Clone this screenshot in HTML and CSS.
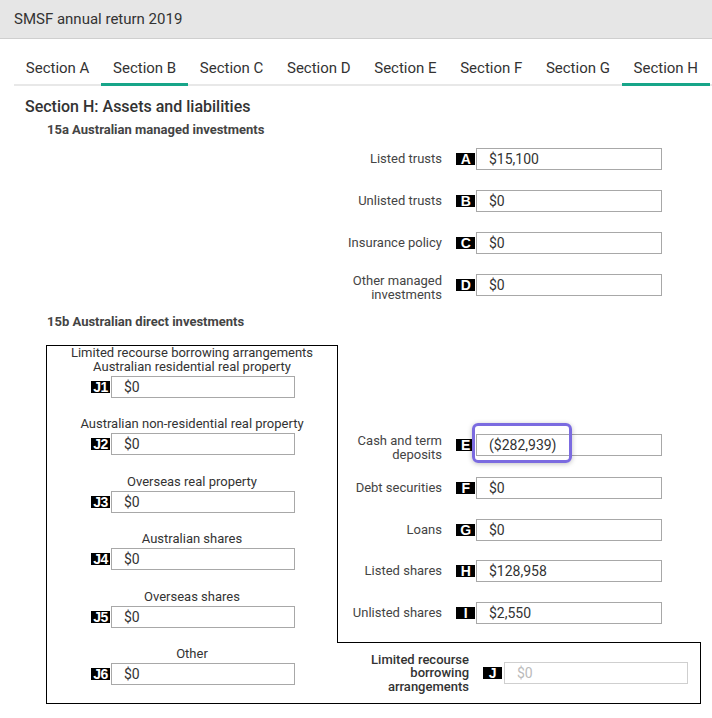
FILE: index.html
```html
<!DOCTYPE html>
<html>
<head>
  <meta charset="utf-8">
  <link rel="stylesheet" href="styles.css">
</head>
<body>
  <div class="header">SMSF annual return 2019</div>

  <div class="tabs">
    <div class="tab">Section A</div>
    <div class="tab active">Section B</div>
    <div class="tab">Section C</div>
    <div class="tab">Section D</div>
    <div class="tab">Section E</div>
    <div class="tab">Section F</div>
    <div class="tab">Section G</div>
    <div class="tab active">Section H</div>
  </div>

  <div class="section-title">Section H: Assets and liabilities</div>

  <!-- 15a -->
  <div class="sub-title">15a Australian managed investments</div>
  <div class="managed">
    <div class="row">
      <div class="label">Listed trusts</div>
      <div class="badge">A</div>
      <div class="field">$15,100</div>
    </div>
    <div class="row">
      <div class="label">Unlisted trusts</div>
      <div class="badge">B</div>
      <div class="field">$0</div>
    </div>
    <div class="row">
      <div class="label">Insurance policy</div>
      <div class="badge">C</div>
      <div class="field">$0</div>
    </div>
    <div class="row">
      <div class="label multi">Other managed investments</div>
      <div class="badge">D</div>
      <div class="field">$0</div>
    </div>
  </div>

  <!-- 15b -->
  <div class="sub-title sub-b">15b Australian direct investments</div>
  <div class="direct">
    <div class="lrba">
      <div class="lrba-title">Limited recourse borrowing arrangements</div>
      <div class="group first">
        <div class="group-label">Australian residential real property</div>
        <div class="group-row"><div class="badge">J1</div><div class="field small">$0</div></div>
      </div>
      <div class="group">
        <div class="group-label">Australian non-residential real property</div>
        <div class="group-row"><div class="badge">J2</div><div class="field small">$0</div></div>
      </div>
      <div class="group">
        <div class="group-label">Overseas real property</div>
        <div class="group-row"><div class="badge">J3</div><div class="field small">$0</div></div>
      </div>
      <div class="group">
        <div class="group-label">Australian shares</div>
        <div class="group-row"><div class="badge">J4</div><div class="field small">$0</div></div>
      </div>
      <div class="group">
        <div class="group-label">Overseas shares</div>
        <div class="group-row"><div class="badge">J5</div><div class="field small">$0</div></div>
      </div>
      <div class="group">
        <div class="group-label">Other</div>
        <div class="group-row"><div class="badge">J6</div><div class="field small">$0</div></div>
      </div>
    </div>

    <div class="direct-fields">
      <div class="row row-e">
        <div class="label multi">Cash and term deposits</div>
        <div class="badge">E</div>
        <div class="field focus-wrap">($282,939)<span class="focus-ring"></span></div>
      </div>
      <div class="row">
        <div class="label">Debt securities</div>
        <div class="badge">F</div>
        <div class="field">$0</div>
      </div>
      <div class="row">
        <div class="label">Loans</div>
        <div class="badge">G</div>
        <div class="field">$0</div>
      </div>
      <div class="row">
        <div class="label">Listed shares</div>
        <div class="badge">H</div>
        <div class="field">$128,958</div>
      </div>
      <div class="row">
        <div class="label">Unlisted shares</div>
        <div class="badge">I</div>
        <div class="field">$2,550</div>
      </div>
    </div>

    <div class="lrba-total">
      <div class="label total-label">Limited recourse borrowing arrangements</div>
      <div class="badge">J</div>
      <div class="field small disabled">$0</div>
    </div>
  </div>
</body>
</html>
```

FILE: styles.css
```css
body {
  margin: 0;
  padding: 0;
  font-family: Roboto, "Liberation Sans", sans-serif;
  font-size: 13px;
  color: #333;
  background: white;
  width: 712px;
  overflow: hidden;
}

.header {
  height: 38px;
  line-height: 38px;
  padding-left: 14px;
  background: #e6e6e6;
  border-bottom: 1px solid #cfcfcf;
  font-size: 15px;
  color: #333;
}

/* tabs */
.tabs {
  display: flex;
  margin: 18px 0 0 14px;
  border-bottom: 2px solid #e8e8e8;
}

.tab {
  padding: 1px 11.8px 5px 11.8px;
  line-height: 20px;
  font-size: 15px;
  color: #333;
  border-bottom: 3px solid transparent;
  margin-bottom: -2px;
  white-space: nowrap;
}

.tab.active {
  border-bottom-color: #17a589;
}

.section-title {
  margin-top: 11px;
  padding-left: 25px;
  font-size: 16px;
  font-weight: 500;
  line-height: 20px;
  color: #333;
}

.sub-title {
  margin-top: 5px;
  padding-left: 47px;
  font-size: 13px;
  font-weight: 700;
  line-height: 16px;
  color: #444;
}

.sub-b {
  margin-top: 13px;
}

/* field rows */
.managed {
  margin-top: 10px;
  padding-left: 342px;
}

.row {
  display: flex;
  align-items: flex-start;
  margin-bottom: 20px;
}

.row:last-child {
  margin-bottom: 0;
}

.label {
  width: 100px;
  text-align: right;
  line-height: 22px;
  color: #444;
  margin-right: 14px;
}

.label.multi {
  line-height: 13.5px;
}

.badge {
  width: 19px;
  height: 12px;
  margin-top: 5px;
  margin-right: 1px;
  background: #000;
  color: white;
  font-family: "Liberation Sans", Arial, sans-serif;
  font-size: 14px;
  font-weight: 700;
  line-height: 12px;
  text-align: center;
  letter-spacing: -0.5px;
  flex-shrink: 0;
}

.field {
  box-sizing: border-box;
  width: 186px;
  height: 22px;
  line-height: 20px;
  padding-left: 12px;
  border: 1px solid #a8a8a8;
  font-size: 14px;
  color: #333;
  text-align: left;
}

.field.small {
  width: 184px;
}

.field.disabled {
  border-color: #cfcfcf;
  color: #bbb;
}

/* 15b grid */
.direct {
  display: grid;
  grid-template-columns: 291px 364px;
  grid-template-rows: 297px 62px;
  margin: 15px 0 0 46px;
  width: 655px;
}

.lrba {
  grid-row: 1 / 3;
  grid-column: 1;
  box-sizing: border-box;
  border: 1px solid #000;
  border-right: none;
  text-align: center;
}

.lrba-title,
.group-label {
  line-height: 14px;
  color: #333;
}

.group {
  margin-top: 19.4px;
}

.group.first {
  margin-top: 0;
}

.group-label {
  margin-bottom: 2px;
}

.group-row {
  display: flex;
  justify-content: center;
  align-items: flex-start;
  padding-left: 2px;
}

.group-row .badge {
  margin-right: 1px;
}

.direct-fields {
  grid-row: 1;
  grid-column: 2;
  border-left: 1px solid #000;
  padding: 89px 0 0 4px;
}

.direct-fields .row {
  margin-bottom: 19.5px;
}

.direct-fields .row-e {
  margin-bottom: 16px;
}

.direct-fields .row:last-child {
  margin-bottom: 0;
}

.lrba-total {
  grid-row: 2;
  grid-column: 2;
  box-sizing: border-box;
  border: 1px solid #000;
  border-left: none;
  display: flex;
  align-items: center;
  padding-left: 27px;
}

.total-label {
  width: 105px;
  line-height: 13.5px;
  font-weight: 500;
  color: #333;
}

.lrba-total .badge {
  margin-top: 0;
  margin-right: 2px;
}

/* focus highlight around E */
.focus-wrap {
  position: relative;
}

.focus-ring {
  position: absolute;
  left: -5px;
  top: -12px;
  width: 100px;
  height: 40px;
  box-sizing: border-box;
  border: 3px solid #7b6be0;
  border-radius: 6px;
  box-shadow: 0 1px 5px rgba(0, 0, 0, 0.25);
}
```
